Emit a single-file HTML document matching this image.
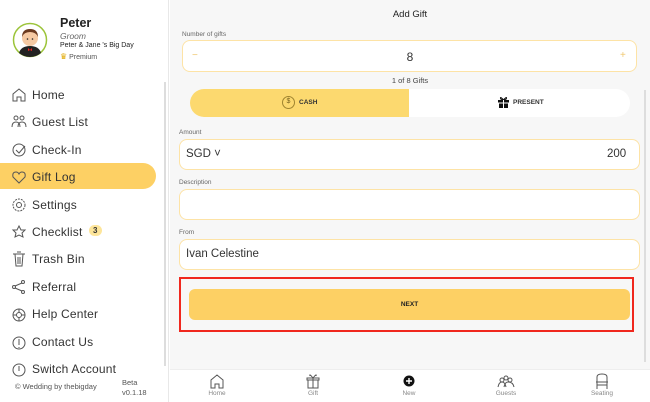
<!DOCTYPE html>
<html><head><meta charset="utf-8"><style>
*{margin:0;padding:0;box-sizing:border-box}
body{width:650px;height:402px;overflow:hidden;font-family:"Liberation Sans",sans-serif;background:#fff;position:relative;color:#333}
.a{position:absolute}
.side{left:0;top:0;width:169px;height:402px;background:#fff;border-right:1px solid #e8e8e8}
.mi{position:absolute;left:32px;font-size:12px;color:#333;letter-spacing:.2px}
.main{left:170px;top:0;width:480px;height:369px;background:#f7f7f7}
.lbl{position:absolute;font-size:6.5px;color:#666}
.box{position:absolute;background:#fff;border:1px solid #fde3a6;border-radius:8px}
.tab{position:absolute;top:390px;font-size:6.5px;color:#888;text-align:center;width:40px}
</style></head><body>
<div class="a side">
 <svg class="a" style="left:12px;top:22px" width="36" height="36" viewBox="0 0 36 36"><circle cx="18" cy="18" r="16.5" fill="#fff" stroke="#9cc43a" stroke-width="1.5"/><path d="M7 31 Q9 24 18 24 Q27 24 29 31 Q24 35 18 35 Q12 35 7 31Z" fill="#222"/><path d="M16 26 L18 28 L20 26 L20 29 L18 28 L16 29Z" fill="#e22"/><circle cx="18" cy="16" r="8" fill="#f5c9a3"/><path d="M10 15 Q10 7 18 7 Q26 7 26 15 Q24 10 18 10 Q12 10 10 15Z" fill="#6b3a20"/><circle cx="15.5" cy="17" r=".8" fill="#222"/><circle cx="20.5" cy="17" r=".8" fill="#222"/></svg>
 <div class="a" style="left:60px;top:16px;font-size:12.5px;font-weight:bold;color:#222">Peter</div>
 <div class="a" style="left:60px;top:31px;font-size:8.5px;font-style:italic;color:#666">Groom</div>
 <div class="a" style="left:60px;top:42px;font-size:7px;color:#222">Peter &amp; Jane 's Big Day</div>
 <div class="a" style="left:60px;top:52px;font-size:7px;color:#555"><span style="color:#e0a800;font-size:8px">♛</span> Premium</div>
 <div class="a" style="left:164px;top:82px;width:2px;height:284px;background:#ddd"></div>
 <div class="a" style="left:0;top:163px;width:156px;height:26px;background:#fdd064;border-radius:0 13px 13px 0"></div>
 <div class="mi" style="top:88px">Home</div>
 <div class="mi" style="top:115px">Guest List</div>
 <div class="mi" style="top:143px">Check-In</div>
 <div class="mi" style="top:170px">Gift Log</div>
 <div class="mi" style="top:198px">Settings</div>
 <div class="mi" style="top:225px">Checklist <span style="display:inline-block;background:#fde59a;border-radius:7px;font-size:8px;font-weight:bold;padding:1px 4px;margin-left:3px;vertical-align:3px">3</span></div>
 <div class="mi" style="top:252px">Trash Bin</div>
 <div class="mi" style="top:280px">Referral</div>
 <div class="mi" style="top:307px">Help Center</div>
 <div class="mi" style="top:335px">Contact Us</div>
 <div class="mi" style="top:362px">Switch Account</div>
 <svg class="a" style="left:11px;top:87px" width="16" height="300" viewBox="0 0 16 300" fill="none" stroke="#555" stroke-width="1">
  <path d="M2 14 V7 L8 2 L14 7 V14 H10 V10 H6 V14Z"/>
  <circle cx="5" cy="31" r="2"/><circle cx="11" cy="31" r="2"/><path d="M1 40 Q1 35 5 35 Q9 35 9 40 M7 40 Q7 35 11 35 Q15 35 15 40"/>
  <circle cx="8" cy="63" r="6"/><path d="M5 63 L8 66 L14 59"/>
  <path d="M8 96 L2 90 Q1 85 5 85 Q7 85 8 87 Q9 85 11 85 Q15 85 14 90Z"/>
  <circle cx="8" cy="118" r="2.5"/><circle cx="8" cy="118" r="6" stroke-dasharray="2 1"/>
  <path d="M8 139 L10 143 L14 143 L11 146 L12 150 L8 148 L4 150 L5 146 L2 143 L6 143Z"/>
  <path d="M2 167 H14 M4 167 L5 179 H11 L12 167 M6 165 H10 M7 170 V177 M9 170 V177"/>
  <circle cx="3" cy="200" r="1.5"/><circle cx="12" cy="195" r="1.5"/><circle cx="12" cy="205" r="1.5"/><path d="M4 199 L11 196 M4 201 L11 204"/>
  <circle cx="8" cy="228" r="6"/><circle cx="8" cy="228" r="2.5"/><path d="M8 222 V225.5 M8 230.5 V234 M2 228 H5.5 M10.5 228 H14"/>
  <circle cx="8" cy="256" r="6"/><path d="M8 252 V258 M8 260 V261"/>
  <circle cx="8" cy="283" r="6"/><path d="M8 279 V284"/>
 </svg>
 <div class="a" style="left:15px;top:382px;font-size:7.5px;color:#555">© Wedding by thebigday</div>
 <div class="a" style="left:122px;top:378px;font-size:7.5px;color:#555;line-height:10px">Beta<br>v0.1.18</div>
</div>
<div class="a main">
 <div class="a" style="left:0;width:480px;top:9px;text-align:center;font-size:9.5px;color:#222">Add Gift</div>
 <div class="lbl" style="left:12px;top:31px">Number of gifts</div>
 <div class="box" style="left:12px;top:40px;width:455px;height:32px"></div>
 <div class="a" style="left:22px;top:50px;color:#f0c870;font-size:10px">−</div>
 <div class="a" style="left:0;width:480px;top:50px;text-align:center;font-size:12px;color:#333">8</div>
 <div class="a" style="left:450px;top:50px;color:#f0c870;font-size:10px">+</div>
 <div class="a" style="left:0;width:480px;top:76px;text-align:center;font-size:7.5px;color:#444">1 of 8 Gifts</div>
 <div class="a" style="left:20px;top:89px;width:440px;height:28px;border-radius:14px;background:#fff;overflow:hidden">
  <div class="a" style="left:0;top:0;width:219px;height:28px;background:#fcd96f"></div>
 </div>
 <div class="a" style="left:112px;top:96px;width:13px;height:13px;border-radius:50%;border:1.5px solid #a08530;font-size:7px;text-align:center;line-height:10px;color:#7a6420">$</div>
 <div class="a" style="left:129px;top:99px;font-size:6.5px;font-weight:bold;color:#333">CASH</div>
 <svg class="a" style="left:328px;top:96px" width="11" height="12" viewBox="0 0 11 12"><path d="M0 4 H11 V6.5 H0Z M1 7.5 H10 V12 H1Z" fill="#111"/><path d="M5.5 4 Q2 0 2.5 2.5 Q3 4 5.5 4 Q8 4 8.5 2.5 Q9 0 5.5 4" fill="none" stroke="#111" stroke-width="1"/><path d="M5.5 4 V12" stroke="#fff" stroke-width="1"/></svg>
 <div class="a" style="left:343px;top:99px;font-size:6.5px;font-weight:bold;color:#333">PRESENT</div>
 <div class="a" style="left:474px;top:90px;width:2px;height:272px;background:#ddd"></div>
 <div class="lbl" style="left:9px;top:129px">Amount</div>
 <div class="box" style="left:9px;top:139px;width:461px;height:31px"></div>
 <div class="a" style="left:16px;top:148px;font-size:11.5px;color:#333">SGD ˅</div>
 <div class="a" style="left:437px;top:148px;font-size:11.5px;color:#333">200</div>
 <div class="lbl" style="left:9px;top:179px">Description</div>
 <div class="box" style="left:9px;top:189px;width:461px;height:31px"></div>
 <div class="lbl" style="left:9px;top:229px">From</div>
 <div class="box" style="left:9px;top:239px;width:461px;height:31px"></div>
 <div class="a" style="left:16px;top:248px;font-size:11.5px;color:#333">Ivan Celestine</div>
 <div class="a" style="left:9px;top:277px;width:455px;height:55px;border:2.5px solid #f0281e"></div>
 <div class="a" style="left:19px;top:289px;width:441px;height:31px;background:#fdd064;border-radius:6px;text-align:center;line-height:31px;font-size:6.5px;font-weight:bold;color:#222">NEXT</div>
</div>
<div class="a" style="left:170px;top:369px;width:480px;height:33px;background:#fff;border-top:1px solid #eee"></div>
<svg class="a" style="left:170px;top:372px" width="480" height="18" viewBox="0 0 480 18" fill="none" stroke="#555" stroke-width="1">
 <path d="M41 16 V8 L47 3 L53 8 V16 H49 V12 H45 V16Z"/>
 <path d="M138 8 H148 V16 H138Z M137 6 H149 V8 H137Z M143 6 V16 M143 6 Q139 1 140 4 M143 6 Q147 1 146 4"/>
 <circle cx="239" cy="9" r="5.5" fill="#111" stroke="none"/><path d="M236 9 H242 M239 6 V12" stroke="#fff" stroke-width="1.4"/>
 <circle cx="332" cy="8" r="2"/><circle cx="340" cy="8" r="2"/><circle cx="336" cy="6" r="2"/><path d="M328 15 Q329 10 332 10 Q335 10 336 15 M334 15 Q335 10 338 10 Q343 10 344 15"/>
 <path d="M427 10 V5 Q427 2 432 2 Q437 2 437 5 V10 M426 10 H438 M427 10 V17 M437 10 V17 M427 13 H437"/>
</svg>
<div class="tab" style="left:197px">Home</div>
<div class="tab" style="left:293px">Gift</div>
<div class="tab" style="left:389px">New</div>
<div class="tab" style="left:486px">Guests</div>
<div class="tab" style="left:582px">Seating</div>
</body></html>
